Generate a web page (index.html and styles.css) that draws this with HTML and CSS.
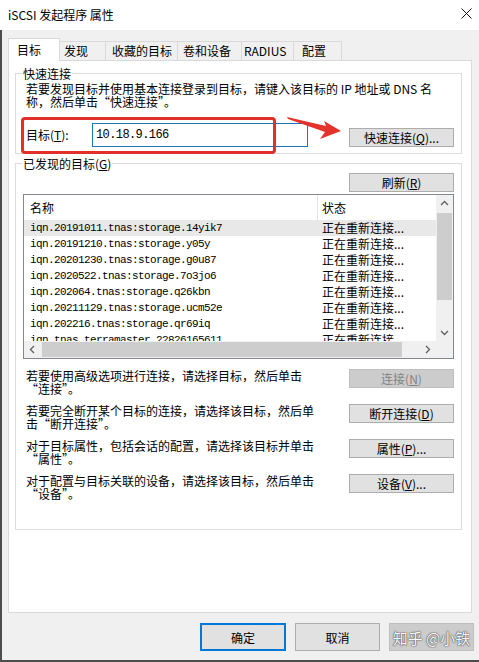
FILE: index.html
```html
<!DOCTYPE html>
<html lang="zh-CN">
<head>
    <meta charset="UTF-8">
    <title>iSCSI 发起程序 属性</title>
    <link rel="stylesheet" href="styles.css">
</head>
<body>
<div class="window">
    <div class="titlebar">
        <span class="title">iSCSI 发起程序 属性</span>
        <svg class="close" width="11" height="11" viewBox="0 0 11 11"><path d="M0.5 0.5L10.5 10.5M10.5 0.5L0.5 10.5" stroke="#111" stroke-width="1" fill="none"/></svg>
    </div>
    <div class="client">
        <div class="tabs">
            <div class="tab active">目标</div>
            <div class="tab">发现</div>
            <div class="tab">收藏的目标</div>
            <div class="tab">卷和设备</div>
            <div class="tab">RADIUS</div>
            <div class="tab">配置</div>
        </div>
        <div class="panel">
            <fieldset class="group quick">
                <legend>快速连接</legend>
                <p class="desc">若要发现目标并使用基本连接登录到目标，请键入该目标的 IP 地址或 DNS 名称，然后单击“快速连接”。</p>
                <div class="target-row">
                    <label>目标(<u>T</u>):</label>
                    <div class="input mono">10.18.9.166</div>
                    <button class="btn quick-btn">快速连接(<u>Q</u>)...</button>
                    <div class="mark"></div>
                    <svg class="arrow" width="64" height="30" viewBox="0 0 64 30"><polygon points="7,5 46,14 44,9 61,19 40,27 45,20 8,7" fill="#e3332b"/></svg>
                </div>
            </fieldset>

            <fieldset class="group found">
                <legend>已发现的目标(<u>G</u>)</legend>
                <div class="refresh-row">
                    <button class="btn">刷新(<u>R</u>)</button>
                </div>
                <div class="list">
                    <div class="list-view">
                        <div class="list-head">
                            <div class="col-name">名称</div>
                            <div class="col-state">状态</div>
                        </div>
                        <div class="list-row selected"><div class="col-name mono">iqn.20191011.tnas:storage.14yik7</div><div class="col-state">正在重新连接...</div></div>
                        <div class="list-row"><div class="col-name mono">iqn.20191210.tnas:storage.y05y</div><div class="col-state">正在重新连接...</div></div>
                        <div class="list-row"><div class="col-name mono">iqn.20201230.tnas:storage.g0u87</div><div class="col-state">正在重新连接...</div></div>
                        <div class="list-row"><div class="col-name mono">iqn.2020522.tnas:storage.7o3jo6</div><div class="col-state">正在重新连接...</div></div>
                        <div class="list-row"><div class="col-name mono">iqn.202064.tnas:storage.q26kbn</div><div class="col-state">正在重新连接...</div></div>
                        <div class="list-row"><div class="col-name mono">iqn.20211129.tnas:storage.ucm52e</div><div class="col-state">正在重新连接...</div></div>
                        <div class="list-row"><div class="col-name mono">iqn.202216.tnas:storage.qr69iq</div><div class="col-state">正在重新连接...</div></div>
                        <div class="list-row"><div class="col-name mono">iqn.tnas.terramaster.22826165611</div><div class="col-state">正在重新连接...</div></div>
                    </div>
                    <div class="vscroll">
                        <svg width="17" height="17"><polyline points="5,10 8.5,6.5 12,10" fill="none" stroke="#606060" stroke-width="1.3"/></svg>
                        <div class="vthumb"></div>
                        <svg class="down" width="17" height="17"><polyline points="5,7 8.5,10.5 12,7" fill="none" stroke="#606060" stroke-width="1.3"/></svg>
                    </div>
                    <div class="hscroll">
                        <svg width="17" height="17"><polyline points="10,5 6.5,8.5 10,12" fill="none" stroke="#606060" stroke-width="1.3"/></svg>
                        <div class="hthumb"></div>
                        <svg class="right" width="17" height="17"><polyline points="7,5 10.5,8.5 7,12" fill="none" stroke="#606060" stroke-width="1.3"/></svg>
                    </div>
                    <div class="corner"></div>
                </div>

                <div class="action">
                    <p>若要使用高级选项进行连接，请选择目标，然后单击“连接”。</p>
                    <button class="btn" disabled>连接(<u>N</u>)</button>
                </div>
                <div class="action">
                    <p>若要完全断开某个目标的连接，请选择该目标，然后单击“断开连接”。</p>
                    <button class="btn">断开连接(<u>D</u>)</button>
                </div>
                <div class="action">
                    <p>对于目标属性，包括会话的配置，请选择该目标并单击“属性”。</p>
                    <button class="btn">属性(<u>P</u>)...</button>
                </div>
                <div class="action">
                    <p>对于配置与目标关联的设备，请选择该目标，然后单击“设备”。</p>
                    <button class="btn">设备(<u>V</u>)...</button>
                </div>
            </fieldset>
        </div>
        <div class="footer">
            <button class="dlg-btn default">确定</button>
            <button class="dlg-btn">取消</button>
            <button class="dlg-btn off">知乎 @小铁</button>
        </div>
    </div>
</div>
</body>
</html>
```

FILE: styles.css
```css
body {
    margin: 0;
    font-family: "Noto Sans CJK SC", "Noto Sans", sans-serif;
    font-size: 12px;
    color: #000;
    background: #fff;
}
.window {
    width: 479px;
    height: 662px;
    display: flex;
    flex-direction: column;
}
.titlebar {
    height: 30px;
    flex-shrink: 0;
    display: flex;
    justify-content: space-between;
    align-items: flex-start;
    padding: 0 7px 0 8px;
    background: #fff;
}
.title {
    line-height: 30px;
}
.close {
    margin-top: 8px;
}
.client {
    flex: 1;
    background: #f0f0f0;
    border-left: 2px solid #4d4d4d;
    border-bottom: 2px solid #4d4d4d;
}
.mono {
    font-family: "Liberation Mono", monospace;
    font-size: 11px;
    letter-spacing: -0.6px;
}

/* tabs */
.tabs {
    display: flex;
    align-items: flex-end;
    height: 22px;
    margin: 8px 0 0 6px;
    position: relative;
    z-index: 1;
}
.tab {
    box-sizing: border-box;
    height: 19px;
    line-height: 18px;
    border: 1px solid #d9d9d9;
    border-bottom: 0;
    background: #f0f0f0;
    white-space: nowrap;
}
.tab + .tab {
    margin-left: -1px;
}
.tab.active {
    height: 23px;
    line-height: 21px;
    margin-bottom: -1px;
    background: #fff;
    position: relative;
    z-index: 2;
}
.tab:nth-child(1) { width: 52px; padding-left: 8px; }
.tab:nth-child(2) { width: 47px; padding-left: 4px; }
.tab:nth-child(3) { width: 73px; padding-left: 6px; }
.tab:nth-child(4) { width: 65px; padding-left: 5px; }
.tab:nth-child(5) { width: 53px; padding-left: 2px; }
.tab:nth-child(6) { width: 49px; padding-left: 8px; }

.panel {
    box-sizing: border-box;
    margin-left: 6px;
    width: 464px;
    height: 553px;
    background: #fff;
    border: 1px solid #d9d9d9;
}

/* group boxes */
.group {
    box-sizing: border-box;
    width: 447px;
    min-width: 0;
    margin: 6px 0 0 6px;
    padding: 2px 7px 6px;
    border: 1px solid #dcdcdc;
}
.group legend {
    padding: 0 1px;
    margin-left: -1px;
    line-height: 13px;
}
.group.found {
    margin-top: 3px;
    padding: 3px 7px 29px;
}
.desc {
    margin: 0;
    padding-left: 3px;
    line-height: 13px;
}
.target-row {
    position: relative;
    display: flex;
    align-items: flex-start;
    margin-top: 15px;
    padding-left: 3px;
}
.target-row label {
    width: 66px;
    line-height: 24px;
}
.input {
    box-sizing: border-box;
    width: 216px;
    height: 24px;
    padding-left: 3px;
    line-height: 22px;
    font-size: 12px;
    border: 1px solid #1f74b5;
    background: #fff;
}
.mark {
    position: absolute;
    left: -2px;
    top: -6px;
    width: 255px;
    height: 37px;
    box-sizing: border-box;
    border: 3px solid #e1302b;
    border-radius: 4px;
}
.arrow {
    position: absolute;
    left: 257px;
    top: -11px;
}

/* buttons */
.btn {
    box-sizing: border-box;
    width: 105px;
    height: 19px;
    padding: 0;
    font: inherit;
    line-height: 17px;
    color: #000;
    background: #e1e1e1;
    border: 1px solid #adadad;
}
.btn:disabled {
    background: #cccccc;
    border-color: #bfbfbf;
    color: #838383;
}
.quick-btn {
    margin-left: auto;
    margin-top: 5px;
}
.refresh-row {
    display: flex;
    justify-content: flex-end;
}

/* target list */
.list {
    box-sizing: border-box;
    margin-top: 2px;
    height: 165px;
    border: 1px solid #828790;
    background: #fff;
    display: grid;
    grid-template-columns: 1fr 17px;
    grid-template-rows: 1fr 17px;
}
.list-view {
    overflow: hidden;
    min-height: 0;
}
.list-head {
    display: flex;
    height: 25px;
    line-height: 25px;
}
.list-row {
    display: flex;
    height: 16px;
    line-height: 16px;
    white-space: nowrap;
}
.list-row.selected {
    background: #e8e8e8;
}
.col-name {
    box-sizing: border-box;
    width: 293px;
    flex-shrink: 0;
    padding-left: 6px;
}
.col-state {
    padding-left: 5px;
    white-space: nowrap;
}
.list-head .col-state {
    border-left: 1px solid #e5e5e5;
    padding-left: 4px;
}
.vscroll {
    background: #f0f0f0;
    display: flex;
    flex-direction: column;
}
.vthumb {
    height: 87px;
    margin: 1px 1px 0;
    background: #cdcdcd;
}
.vscroll .down {
    margin-top: auto;
}
.hscroll {
    background: #f0f0f0;
    display: flex;
}
.hthumb {
    width: 360px;
    margin: 1px 0 1px 1px;
    background: #cdcdcd;
}
.hscroll .right {
    margin-left: auto;
}
.corner {
    background: #f0f0f0;
}

.action {
    display: flex;
    align-items: flex-start;
    margin-top: 9px;
}
.list + .action {
    margin-top: 10px;
}
.action p {
    margin: 0;
    padding-left: 3px;
    width: 290px;
    line-height: 13px;
}
.action .btn {
    margin-left: auto;
}

/* dialog buttons */
.footer {
    display: flex;
    justify-content: flex-end;
    gap: 9px;
    margin-top: 10px;
    padding-right: 5px;
}
.dlg-btn {
    box-sizing: border-box;
    width: 85px;
    height: 28px;
    padding: 0;
    font: inherit;
    color: #000;
    background: #e1e1e1;
    border: 1px solid #adadad;
}
.dlg-btn.default {
    width: 86px;
    border: 2px solid #0078d7;
}
.dlg-btn.off {
    background: #cccccc;
    border-color: #bfbfbf;
    color: #fafafa;
    font-size: 15px;
    white-space: nowrap;
    text-shadow: 0 0 1px #4a4a4a, 0 0 1px #4a4a4a, 0 0 2px #7a7a7a;
}
```
